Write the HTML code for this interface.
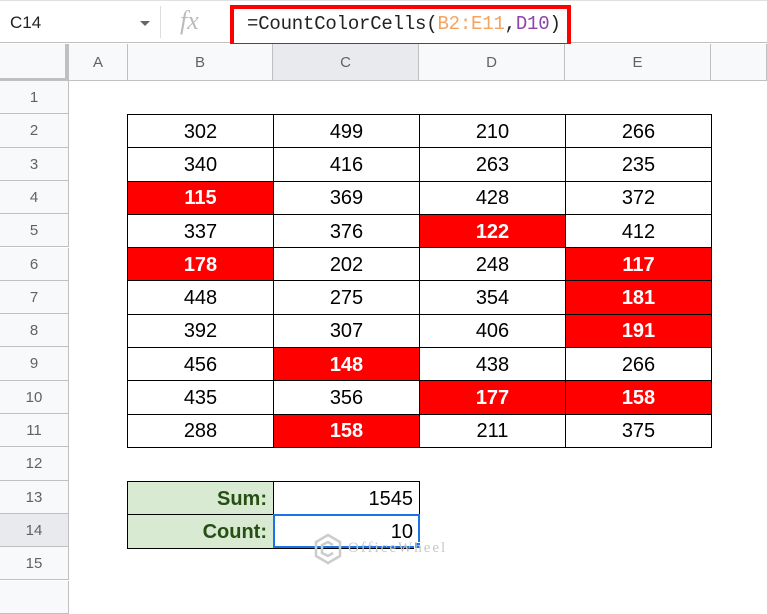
<!DOCTYPE html><html><head><style>
*{margin:0;padding:0;box-sizing:border-box}
body{width:767px;height:588px;overflow:hidden;background:#fff;font-family:"Liberation Sans",Arial,sans-serif;position:relative}
.abs{position:absolute}
.hdr{position:absolute;background:#f8f9fa;color:#5f6368;font-size:15px;text-align:center;border-right:1px solid #c0c0c0;border-bottom:1px solid #c0c0c0}
table{position:absolute;border-collapse:collapse;font-size:20px;table-layout:fixed}
td{border:1.5px solid #000;height:33.3px;text-align:center;padding:2px 0 0;color:#000}
td.r{background:#f00;color:#fff;font-weight:bold}
</style></head><body>
<div class="abs" style="left:0;top:0;width:767px;height:43px;background:#fff;border-bottom:1px solid #c0c0c0;border-top:1px solid #e0e0e0"></div>
<div class="abs" style="left:10px;top:13px;font-size:17px;color:#222">C14</div>
<div class="abs" style="left:140px;top:21px;width:0;height:0;border-left:5px solid transparent;border-right:5px solid transparent;border-top:5px solid #666"></div>
<div class="abs" style="left:160px;top:6px;width:1px;height:32px;background:#ddd"></div>
<div class="abs" style="left:180px;top:6px;font-family:'Liberation Serif',serif;font-style:italic;font-size:26px;color:#bbb">fx</div>
<div class="abs" style="left:230px;top:5px;width:341px;height:42px;border:4px solid #f00;background:#fff"></div>
<div class="abs" style="left:247px;top:13px;font-family:'Liberation Mono',monospace;font-size:19px;color:#222;letter-spacing:-0.2px">=CountColorCells(<span style="color:#f4a460">B2:E11</span>,<span style="color:#8e44ad">D10</span>)</div>
<div class="hdr" style="left:0;top:44px;width:69px;height:38px;border-bottom:4px solid #c0c0c0;border-right:4px solid #c0c0c0"></div>
<div class="hdr" style="left:69px;top:44px;width:59px;height:37px;line-height:37px">A</div>
<div class="hdr" style="left:128px;top:44px;width:145px;height:37px;line-height:37px">B</div>
<div class="hdr" style="left:273px;top:44px;width:146px;height:37px;line-height:37px;background:#e8eaed">C</div>
<div class="hdr" style="left:419px;top:44px;width:146px;height:37px;line-height:37px">D</div>
<div class="hdr" style="left:565px;top:44px;width:146px;height:37px;line-height:37px">E</div>
<div class="hdr" style="left:711px;top:44px;width:56px;height:37px"></div>
<div id="rows"></div>
<script>
var h='';for(var i=1;i<=16;i++){var t=81+(i-1)*33.3;h+='<div class="hdr" style="left:0;top:'+t+'px;width:69px;height:33.3px;line-height:33px;'+(i==14?'background:#e8eaed':'')+'">'+(i<=15?i:'')+'</div>';}
document.getElementById('rows').innerHTML=h;
</script>
<table style="left:127px;top:114px;width:585px">
<colgroup><col style="width:146px"><col style="width:146px"><col style="width:146px"><col style="width:146px"></colgroup>
<tr><td>302</td><td>499</td><td>210</td><td>266</td></tr>
<tr><td>340</td><td>416</td><td>263</td><td>235</td></tr>
<tr><td class="r">115</td><td>369</td><td>428</td><td>372</td></tr>
<tr><td>337</td><td>376</td><td class="r">122</td><td>412</td></tr>
<tr><td class="r">178</td><td>202</td><td>248</td><td class="r">117</td></tr>
<tr><td>448</td><td>275</td><td>354</td><td class="r">181</td></tr>
<tr><td>392</td><td>307</td><td>406</td><td class="r">191</td></tr>
<tr><td>456</td><td class="r">148</td><td>438</td><td>266</td></tr>
<tr><td>435</td><td>356</td><td class="r">177</td><td class="r">158</td></tr>
<tr><td>288</td><td class="r">158</td><td>211</td><td>375</td></tr>
</table>
<table style="left:127px;top:481px;width:293px">
<colgroup><col style="width:146px"><col style="width:146px"></colgroup>
<tr><td style="background:#d9ead3;color:#274e13;font-weight:bold;text-align:right;padding-right:6px">Sum:</td><td style="text-align:right;padding-right:6px">1545</td></tr>
<tr><td style="background:#d9ead3;color:#274e13;font-weight:bold;text-align:right;padding-right:6px">Count:</td><td style="text-align:right;padding-right:6px">10</td></tr>
</table>
<div class="abs" style="left:273px;top:514px;width:147px;height:34px;border:2px solid #1a73e8"></div>
<div class="abs" style="left:414px;top:542px;width:7px;height:7px;background:#1a73e8;border:1px solid #fff"></div>
<div class="abs" style="left:348px;top:540px;font-family:'Liberation Serif',serif;font-size:15px;letter-spacing:2px;color:#c8c8c8">OfficeWheel</div>
<svg class="abs" style="left:313px;top:533px" width="30" height="32" viewBox="0 0 30 32"><path d="M15 2L27 9V23L15 30L3 23V9Z" fill="none" stroke="#ccc" stroke-width="2.5"/><path d="M20 12L15 9L9 12V20L15 23L20 20" fill="none" stroke="#ccc" stroke-width="2.5"/></svg>
</body></html>
